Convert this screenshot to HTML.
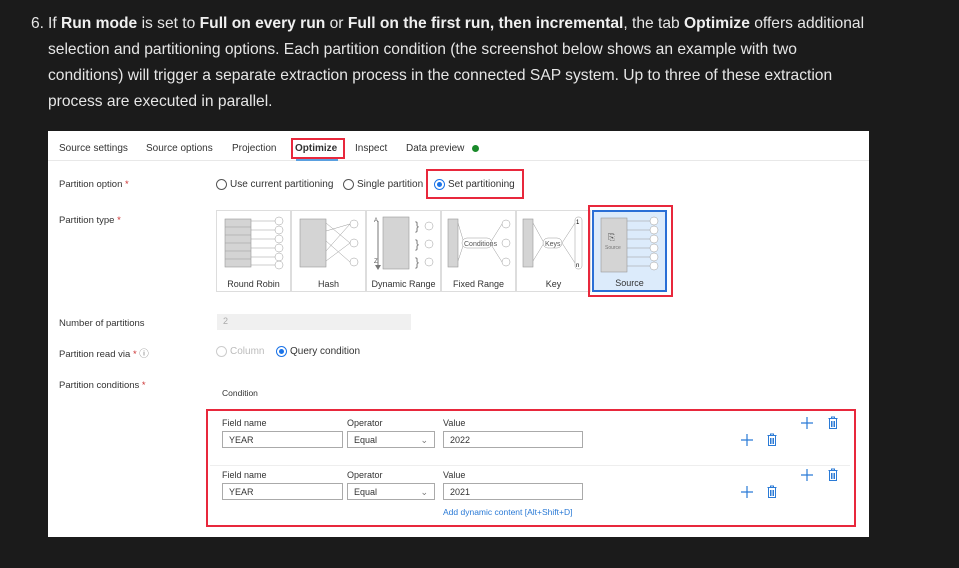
<!DOCTYPE html>
<html><head><meta charset="utf-8"><style>
body{margin:0;width:959px;height:568px;background:#1b1b1b;overflow:hidden;font-family:"Liberation Sans",sans-serif;position:relative}
.p{position:absolute;left:48px;top:11px;width:900px;color:#e6e6e6;font-size:15.6px;line-height:26px;white-space:nowrap}
.p b{color:#f0f0f0}
.n{position:absolute;left:31px;top:11px;color:#e6e6e6;font-size:15.6px;line-height:26px}
.shot{position:absolute;left:48px;top:131px;width:821px;height:406px;background:#fff}
.a{position:absolute;font-size:10px;color:#333;white-space:nowrap}
.lab{font-size:9.5px;color:#333}
.red{position:absolute;border:2px solid #e8283c}
.rad{display:inline-block;width:11px;height:11px;border:1px solid #555;border-radius:50%;vertical-align:-3px;margin-right:3px;box-sizing:border-box;position:relative}
.rad.on{border-color:#1a73e8}
.rad.on:after{content:"";position:absolute;left:2px;top:2px;width:5px;height:5px;border-radius:50%;background:#1a73e8}
.tile{position:absolute;top:79px;width:75px;height:82px;border:1px solid #ddd;box-sizing:border-box;background:#fff}
.tile span{position:absolute;left:0;right:0;bottom:2px;text-align:center;font-size:9px;color:#333}
.inp{position:absolute;height:17px;border:1px solid #aaa;box-sizing:border-box;font-size:9px;color:#333;padding:3px 6px}
.blue{color:#2a7ad6}
.tr{position:absolute}
</style></head><body>
<div class="n">6.</div>
<div class="p">If <b>Run mode</b> is set to <b>Full on every run</b> or <b>Full on the first run, then incremental</b>, the tab <b>Optimize</b> offers additional<br>selection and partitioning options. Each partition condition (the screenshot below shows an example with two<br>conditions) will trigger a separate extraction process in the connected SAP system. Up to three of these extraction<br>process are executed in parallel.</div>
<div class="shot">
 <div style="position:absolute;left:0;right:0;top:29px;height:1px;background:#e8e8e8"></div>
 <div class="a" style="left:11px;top:12px">Source settings</div>
 <div class="a" style="left:98px;top:12px">Source options</div>
 <div class="a" style="left:184px;top:12px">Projection</div>
 <div class="a" style="left:247px;top:12px;font-weight:bold">Optimize</div>
 <div style="position:absolute;left:248px;top:28px;width:42px;height:2px;background:#5aa0e0"></div>
 <div class="red" style="left:243px;top:7px;width:50px;height:17px"></div>
 <div class="a" style="left:307px;top:12px">Inspect</div>
 <div class="a" style="left:358px;top:12px">Data preview</div>
 <div style="position:absolute;left:424px;top:14px;width:7px;height:7px;border-radius:50%;background:#1a8a2a"></div>

 <div class="a lab" style="left:11px;top:48px">Partition option <span style="color:#c33">*</span></div>
 <div class="a" style="left:168px;top:48px"><i class="rad"></i>Use current partitioning</div>
 <div class="a" style="left:295px;top:48px"><i class="rad"></i>Single partition</div>
 <div class="a" style="left:386px;top:48px"><i class="rad on"></i>Set partitioning</div>
 <div class="red" style="left:378px;top:38px;width:94px;height:26px"></div>

 <div class="a lab" style="left:11px;top:84px">Partition type <span style="color:#c33">*</span></div>

 <div class="tile" style="left:168px"><svg width="75" height="70"><g fill="#d4d4d4" stroke="#999" stroke-width=".6"><rect x="8" y="8" width="26" height="48"/></g><g stroke="#999" stroke-width=".5"><line x1="8" y1="16" x2="34" y2="16"/><line x1="8" y1="24" x2="34" y2="24"/><line x1="8" y1="32" x2="34" y2="32"/><line x1="8" y1="40" x2="34" y2="40"/><line x1="8" y1="48" x2="34" y2="48"/><line x1="34" y1="10" x2="58" y2="10"/><line x1="34" y1="19" x2="58" y2="19"/><line x1="34" y1="28" x2="58" y2="28"/><line x1="34" y1="37" x2="58" y2="37"/><line x1="34" y1="46" x2="58" y2="46"/><line x1="34" y1="54" x2="58" y2="54"/></g><g fill="#fff" stroke="#999" stroke-width=".5"><circle cx="62" cy="10" r="4"/><circle cx="62" cy="19" r="4"/><circle cx="62" cy="28" r="4"/><circle cx="62" cy="37" r="4"/><circle cx="62" cy="46" r="4"/><circle cx="62" cy="54" r="4"/></g></svg><span>Round Robin</span></div>
 <div class="tile" style="left:243px"><svg width="75" height="70"><rect x="8" y="8" width="26" height="48" fill="#d4d4d4" stroke="#999" stroke-width=".6"/><g stroke="#999" stroke-width=".5"><line x1="34" y1="12" x2="58" y2="32"/><line x1="34" y1="20" x2="58" y2="13"/><line x1="34" y1="30" x2="58" y2="51"/><line x1="34" y1="40" x2="58" y2="13"/><line x1="34" y1="50" x2="58" y2="32"/></g><g fill="#fff" stroke="#999" stroke-width=".5"><circle cx="62" cy="13" r="4"/><circle cx="62" cy="32" r="4"/><circle cx="62" cy="51" r="4"/></g></svg><span>Hash</span></div>
 <div class="tile" style="left:318px"><svg width="75" height="70"><rect x="16" y="6" width="26" height="52" fill="#d4d4d4" stroke="#999" stroke-width=".6"/><line x1="11" y1="10" x2="11" y2="56" stroke="#777"/><path d="M8 54 L14 54 L11 59Z" fill="#777"/><text x="7" y="11" font-size="6" fill="#555">A</text><text x="7" y="52" font-size="6" fill="#555">Z</text><g fill="none" stroke="#999" stroke-width=".5"><circle cx="62" cy="15" r="4"/><circle cx="62" cy="33" r="4"/><circle cx="62" cy="51" r="4"/></g><text x="48" y="19" font-size="12" fill="#777">}</text><text x="48" y="37" font-size="12" fill="#777">}</text><text x="48" y="55" font-size="12" fill="#777">}</text></svg><span>Dynamic Range</span></div>
 <div class="tile" style="left:393px"><svg width="75" height="70"><rect x="6" y="8" width="10" height="48" fill="#d4d4d4" stroke="#999" stroke-width=".6"/><g stroke="#999" stroke-width=".5"><line x1="16" y1="12" x2="22" y2="32"/><line x1="16" y1="50" x2="22" y2="32"/><line x1="48" y1="32" x2="60" y2="13"/><line x1="48" y1="32" x2="60" y2="51"/></g><rect x="20" y="27" width="30" height="10" rx="5" fill="#fff" stroke="#999" stroke-width=".5"/><text x="22" y="35" font-size="7" fill="#555">Conditions</text><g fill="#fff" stroke="#999" stroke-width=".5"><circle cx="64" cy="13" r="4"/><circle cx="64" cy="32" r="4"/><circle cx="64" cy="51" r="4"/></g></svg><span>Fixed Range</span></div>
 <div class="tile" style="left:468px"><svg width="75" height="70"><rect x="6" y="8" width="10" height="48" fill="#d4d4d4" stroke="#999" stroke-width=".6"/><g stroke="#999" stroke-width=".5"><line x1="16" y1="12" x2="27" y2="32"/><line x1="16" y1="50" x2="27" y2="32"/><line x1="45" y1="32" x2="58" y2="12"/><line x1="45" y1="32" x2="58" y2="52"/></g><rect x="26" y="27" width="19" height="10" rx="5" fill="#fff" stroke="#999" stroke-width=".5"/><text x="28" y="35" font-size="7" fill="#555">Keys</text><rect x="58" y="6" width="7" height="52" rx="3" fill="#fff" stroke="#999" stroke-width=".5"/><text x="59" y="13" font-size="6">1</text><text x="59" y="56" font-size="6">n</text></svg><span>Key</span></div>
 <div class="tile" style="left:544px;border:2px solid #2a6fd6;background:#dcebfb"><svg width="71" height="68"><rect x="7" y="6" width="26" height="54" fill="#d4d4d4" stroke="#999" stroke-width=".6"/><text x="11" y="37" font-size="5" fill="#777">Source</text><text x="14" y="28" font-size="9" fill="#555">⎘</text><g stroke="#999" stroke-width=".5"><line x1="33" y1="9" x2="56" y2="9"/><line x1="33" y1="18" x2="56" y2="18"/><line x1="33" y1="27" x2="56" y2="27"/><line x1="33" y1="36" x2="56" y2="36"/><line x1="33" y1="45" x2="56" y2="45"/><line x1="33" y1="54" x2="56" y2="54"/></g><g fill="#fff" stroke="#999" stroke-width=".5"><circle cx="60" cy="9" r="4"/><circle cx="60" cy="18" r="4"/><circle cx="60" cy="27" r="4"/><circle cx="60" cy="36" r="4"/><circle cx="60" cy="45" r="4"/><circle cx="60" cy="54" r="4"/></g></svg><span>Source</span></div>
 <div class="red" style="left:540px;top:74px;width:81px;height:88px"></div>

 <div class="a lab" style="left:11px;top:187px">Number of partitions</div>
 <div style="position:absolute;left:169px;top:183px;width:194px;height:16px;background:#f0f0f0;font-size:9px;color:#aaa;padding:2px 6px;box-sizing:border-box">2</div>
 <div class="a lab" style="left:11px;top:215px">Partition read via <span style="color:#c33">*</span> <span style="color:#777">ⓘ</span></div>
 <div class="a" style="left:168px;top:215px;color:#bbb"><i class="rad" style="border-color:#ccc"></i>Column</div>
 <div class="a" style="left:228px;top:215px"><i class="rad on"></i>Query condition</div>
 <div class="a lab" style="left:11px;top:249px">Partition conditions <span style="color:#c33">*</span></div>
 <div class="a" style="left:174px;top:257px;font-size:8.5px">Condition</div>

 <div class="red" style="left:158px;top:278px;width:646px;height:114px"></div>
 <div style="position:absolute;left:162px;top:334px;width:640px;height:1px;background:#eee"></div>
 <div class="a" style="left:174px;top:287px;font-size:9px">Field name</div>
 <div class="a" style="left:299px;top:287px;font-size:9px">Operator</div>
 <div class="a" style="left:395px;top:287px;font-size:9px">Value</div>
 <div class="inp" style="left:174px;top:300px;width:121px">YEAR</div>
 <div class="inp" style="left:299px;top:300px;width:88px">Equal<span style="float:right;color:#777">⌄</span></div>
 <div class="inp" style="left:395px;top:300px;width:140px">2022</div>
 <div class="a" style="left:174px;top:339px;font-size:9px">Field name</div>
 <div class="a" style="left:299px;top:339px;font-size:9px">Operator</div>
 <div class="a" style="left:395px;top:339px;font-size:9px">Value</div>
 <div class="inp" style="left:174px;top:352px;width:121px">YEAR</div>
 <div class="inp" style="left:299px;top:352px;width:88px">Equal<span style="float:right;color:#777">⌄</span></div>
 <div class="inp" style="left:395px;top:352px;width:140px">2021</div>
 <div class="a blue" style="left:395px;top:376px;font-size:8.5px">Add dynamic content [Alt+Shift+D]</div>

 <svg class="tr" style="left:752px;top:285px" width="14" height="14"><path d="M7 1V13M1 7H13" stroke="#2a7ad6" stroke-width="1.2"/></svg>
 <svg class="tr" style="left:780px;top:285px" width="10" height="13"><path d="M0.5 2.5H9.5M3.5 2.5V1H6.5V2.5M1.5 3V12.5H8.5V3M3.5 5V11M5 5V11M6.5 5V11" fill="none" stroke="#2a7ad6" stroke-width="1"/></svg>
 <svg class="tr" style="left:692px;top:302px" width="14" height="14"><path d="M7 1V13M1 7H13" stroke="#2a7ad6" stroke-width="1.2"/></svg>
 <svg class="tr" style="left:719px;top:302px" width="10" height="13"><path d="M0.5 2.5H9.5M3.5 2.5V1H6.5V2.5M1.5 3V12.5H8.5V3M3.5 5V11M5 5V11M6.5 5V11" fill="none" stroke="#2a7ad6" stroke-width="1"/></svg>
 <svg class="tr" style="left:752px;top:337px" width="14" height="14"><path d="M7 1V13M1 7H13" stroke="#2a7ad6" stroke-width="1.2"/></svg>
 <svg class="tr" style="left:780px;top:337px" width="10" height="13"><path d="M0.5 2.5H9.5M3.5 2.5V1H6.5V2.5M1.5 3V12.5H8.5V3M3.5 5V11M5 5V11M6.5 5V11" fill="none" stroke="#2a7ad6" stroke-width="1"/></svg>
 <svg class="tr" style="left:692px;top:354px" width="14" height="14"><path d="M7 1V13M1 7H13" stroke="#2a7ad6" stroke-width="1.2"/></svg>
 <svg class="tr" style="left:719px;top:354px" width="10" height="13"><path d="M0.5 2.5H9.5M3.5 2.5V1H6.5V2.5M1.5 3V12.5H8.5V3M3.5 5V11M5 5V11M6.5 5V11" fill="none" stroke="#2a7ad6" stroke-width="1"/></svg>
</div>
</body></html>
